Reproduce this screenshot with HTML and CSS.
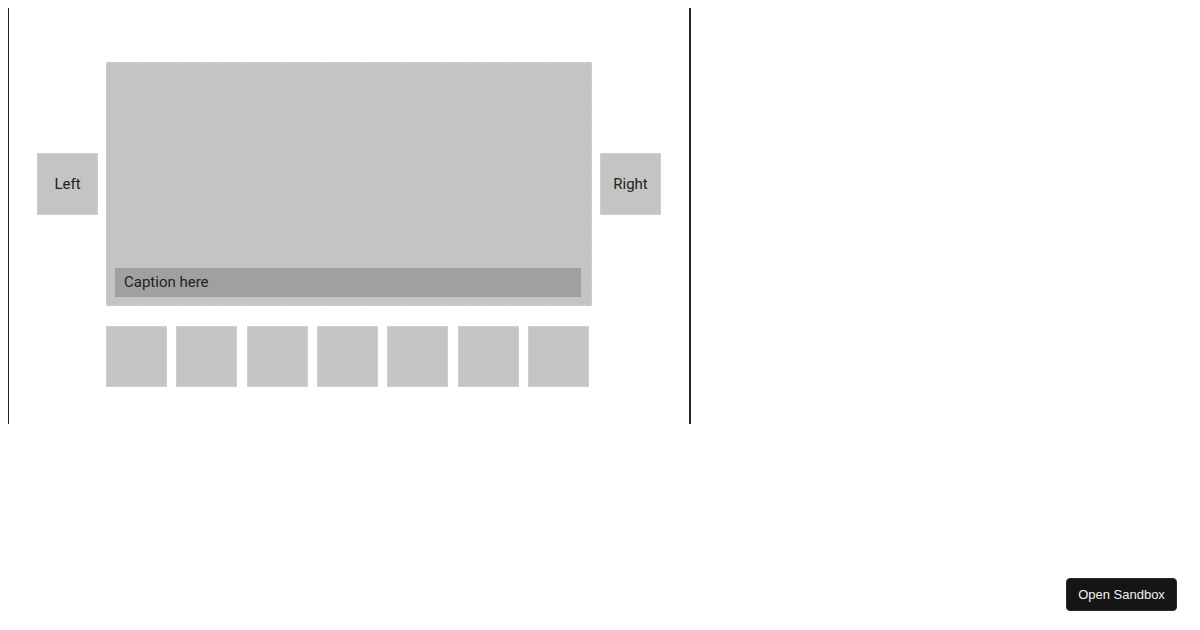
FILE: index.html
```html
<!DOCTYPE html>
<html>
<head>
<meta charset="utf-8">
<link rel="stylesheet" href="styles.css">
</head>
<body>
<div class="frame">
  <div class="gallery">
    <button class="nav nav-left">Left</button>
    <div class="main-image">
      <div class="caption">Caption here</div>
    </div>
    <button class="nav nav-right">Right</button>
    <div class="thumbs">
      <div class="thumb"></div>
      <div class="thumb"></div>
      <div class="thumb"></div>
      <div class="thumb"></div>
      <div class="thumb"></div>
      <div class="thumb"></div>
      <div class="thumb"></div>
    </div>
  </div>
</div>
<a class="sandbox-btn">Open Sandbox</a>
</body>
</html>
```
FILE: styles.css
```css
html, body {
  margin: 0;
  padding: 0;
  background: #ffffff;
}
body {
  padding: 8px;
  font-family: Roboto, "Noto Sans", sans-serif;
  color: #222222;
}
.frame {
  box-sizing: border-box;
  width: 683px;
  height: 416px;
  border-left: 1px solid #22252b;
  border-right: 2px solid #22252b;
  padding: 54px 28px 0 28px;
}
.gallery {
  display: grid;
  grid-template-columns: 61px 486px 61px;
  column-gap: 8px;
  row-gap: 20px;
}
.nav {
  box-sizing: border-box;
  width: 61px;
  height: 62px;
  align-self: center;
  border: 1px solid #cdcdcd;
  background: #c4c4c4;
  font-family: Roboto, "Noto Sans", sans-serif;
  font-size: 15px;
  color: #222222;
  padding: 0;
  margin: 0;
}
.main-image {
  box-sizing: border-box;
  height: 244px;
  background: #c4c4c4;
  border: 1px dashed #d2d2d2;
  display: flex;
  flex-direction: column;
  justify-content: flex-end;
  padding: 8px 10px 8px 8px;
}
.caption {
  height: 29px;
  box-sizing: border-box;
  background: #a0a0a0;
  border: 1px dashed #9a9a9a;
  padding: 0 8px 1px;
  display: flex;
  align-items: center;
  font-size: 15px;
  color: #222222;
}
.thumbs {
  grid-column: 2;
  display: flex;
  gap: 9.33px;
}
.thumb {
  box-sizing: border-box;
  width: 61px;
  height: 61px;
  background: #c4c4c4;
  border: 1px solid #d0d0d0;
}
.sandbox-btn {
  position: fixed;
  right: 23px;
  bottom: 19px;
  box-sizing: border-box;
  width: 111px;
  height: 33px;
  background: #151515;
  border: 1px solid #2a2a2a;
  border-radius: 4px;
  color: #f2f2f2;
  font-family: "Liberation Sans", Arial, sans-serif;
  font-size: 13px;
  display: flex;
  align-items: center;
  justify-content: center;
}
```
